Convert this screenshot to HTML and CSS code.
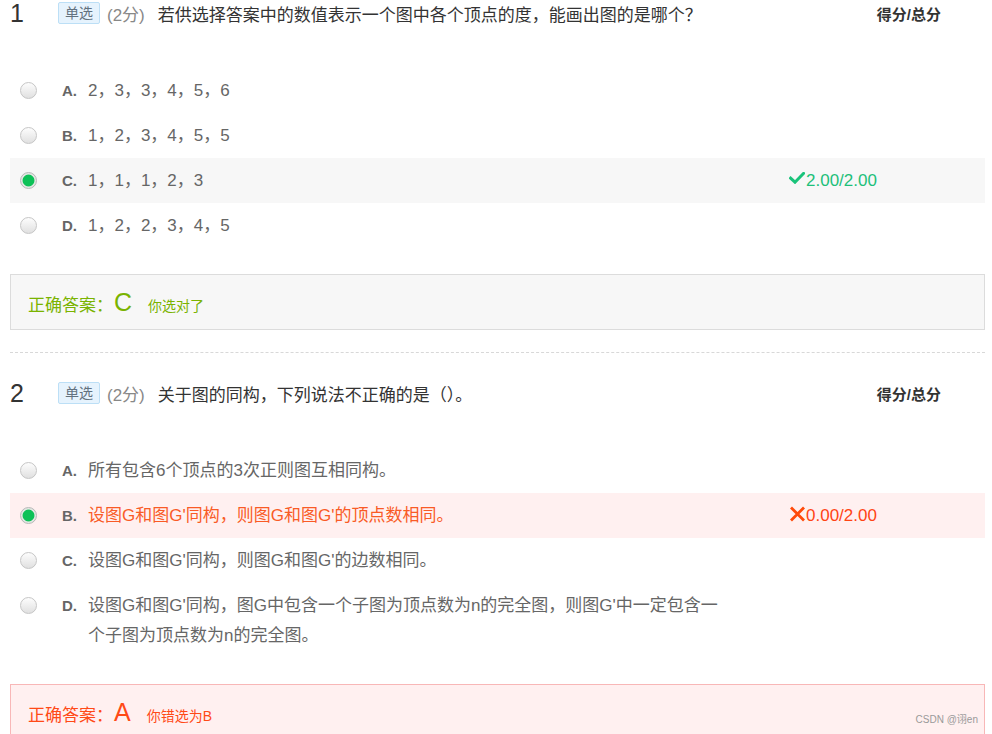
FILE: index.html
```html
<!DOCTYPE html>
<html lang="zh-CN">
<head>
<meta charset="utf-8">
<title>作业详情</title>
<link rel="stylesheet" href="styles.css">
</head>
<body>
<div class="page">
  <section class="question">
    <div class="q-head">
      <span class="q-num">1</span>
      <span class="q-type">单选</span>
      <span class="q-score">(2分)</span>
      <span class="q-title">若供选择答案中的数值表示一个图中各个顶点的度，能画出图的是哪个？</span>
      <span class="q-total">得分/总分</span>
    </div>
    <ul class="options">
      <li class="option"><span class="radio"></span><span class="opt-letter">A.</span><span class="opt-text">2，3，3，4，5，6</span></li>
      <li class="option"><span class="radio"></span><span class="opt-letter">B.</span><span class="opt-text">1，2，3，4，5，5</span></li>
      <li class="option option--right"><span class="radio radio--checked"></span><span class="opt-letter">C.</span><span class="opt-text">1，1，1，2，3</span>
        <span class="opt-result result--right"><svg class="icon-check" viewBox="0 0 16 12" width="16" height="12"><path d="M1.6 6.2 L6 10.2 L14.6 1.4" fill="none" stroke="#19c37a" stroke-width="3" stroke-linecap="square"/></svg>2.00/2.00</span></li>
      <li class="option"><span class="radio"></span><span class="opt-letter">D.</span><span class="opt-text">1，2，2，3，4，5</span></li>
    </ul>
    <div class="answer answer--right">
      <span class="answer-label">正确答案：</span><span class="answer-key">C</span><span class="answer-note">你选对了</span>
    </div>
  </section>

  <hr class="divider">

  <section class="question">
    <div class="q-head">
      <span class="q-num">2</span>
      <span class="q-type">单选</span>
      <span class="q-score">(2分)</span>
      <span class="q-title">关于图的同构，下列说法不正确的是（）。</span>
      <span class="q-total">得分/总分</span>
    </div>
    <ul class="options">
      <li class="option"><span class="radio"></span><span class="opt-letter">A.</span><span class="opt-text">所有包含6个顶点的3次正则图互相同构。</span></li>
      <li class="option option--wrong"><span class="radio radio--checked"></span><span class="opt-letter">B.</span><span class="opt-text">设图G和图G'同构，则图G和图G'的顶点数相同。</span>
        <span class="opt-result result--wrong"><svg class="icon-cross" viewBox="0 0 17 16" width="17" height="16"><path d="M2 1.5 L15 14.5 M15 1.5 L2 14.5" fill="none" stroke="#ff4a0a" stroke-width="2.8"/></svg>0.00/2.00</span></li>
      <li class="option"><span class="radio"></span><span class="opt-letter">C.</span><span class="opt-text">设图G和图G'同构，则图G和图G'的边数相同。</span></li>
      <li class="option"><span class="radio"></span><span class="opt-letter">D.</span><span class="opt-text">设图G和图G'同构，图G中包含一个子图为顶点数为n的完全图，则图G'中一定包含一个子图为顶点数为n的完全图。</span></li>
    </ul>
    <div class="answer answer--wrong">
      <span class="answer-label">正确答案：</span><span class="answer-key">A</span><span class="answer-note">你错选为B</span>
    </div>
  </section>

  <div class="watermark">CSDN @诩en</div>
</div>
</body>
</html>
```

FILE: styles.css
```css
html, body {
  margin: 0;
  padding: 0;
  height: 734px;
  overflow: hidden;
  background: #fff;
}

body {
  font-family: "Liberation Sans", "Noto Sans CJK SC", sans-serif;
  color: #333;
}

.page {
  position: relative;
  width: 975px;
  padding-left: 10px;
  height: 734px;
}

.q-head {
  display: flex;
  align-items: center;
  height: 26px;
  margin-bottom: 42px;
  white-space: nowrap;
}

.q-num {
  width: 48px;
  font-size: 25px;
  line-height: 26px;
  color: #333;
}

.q-type {
  box-sizing: border-box;
  height: 22px;
  line-height: 20px;
  padding: 0 6px;
  border: 1px solid #bcdff6;
  background: #e6f3fd;
  border-radius: 2px;
  font-size: 14px;
  color: #63727f;
}

.q-score {
  margin-left: 7px;
  margin-right: 13px;
  font-size: 17px;
  color: #888;
}

.q-title {
  flex: 1;
  font-size: 17px;
  color: #333;
}

.q-total {
  margin-right: 44px;
  font-size: 15px;
  font-weight: bold;
  color: #333;
}

.options {
  list-style: none;
  margin: 0;
  padding: 0;
}

.option {
  display: flex;
  align-items: flex-start;
  padding: 7.5px 0 7.5px 10px;
  line-height: 30px;
  font-size: 17px;
  color: #666;
}

.option--right {
  background: #f7f7f7;
}

.option--wrong {
  background: #fff0f0;
}

.radio {
  flex: none;
  box-sizing: border-box;
  width: 17px;
  height: 17px;
  margin-top: 6.5px;
  margin-right: 25px;
  border-radius: 50%;
  border: 1px solid #c6c6c6;
  background: linear-gradient(#fdfdfd, #e0e0e0);
}

.radio--checked {
  border-color: #b8b8b8;
  background: radial-gradient(circle, #0dc157 0, #0dc157 5.4px, #e2e8e3 6.4px);
}

.opt-letter {
  flex: none;
  width: 26px;
  font-size: 15px;
  font-weight: bold;
  color: #666;
}

.opt-text {
  width: 640px;
  color: #666;
}

.option--wrong .opt-text {
  color: #f95b26;
}

.opt-result {
  margin-left: 61px;
  font-size: 17px;
  white-space: nowrap;
}

.result--right {
  color: #1dc07a;
}

.result--wrong {
  color: #ff4414;
}

.icon-check {
  vertical-align: 2px;
  margin-right: 1px;
}

.icon-cross {
  vertical-align: -1px;
}

.answer {
  box-sizing: border-box;
  height: 56px;
  margin-top: 26px;
  padding-left: 17px;
  line-height: 54px;
  white-space: nowrap;
}

.answer--right {
  border: 1px solid #dcdcdc;
  background: #f7f7f7;
  color: #7ab300;
}

.answer--wrong {
  border: 1px solid #f8b7b7;
  background: #fff0f0;
  color: #ff4a17;
}

.answer-label {
  font-size: 17px;
}

.answer-key {
  font-size: 25px;
  margin-left: 1px;
}

.answer-note {
  margin-left: 16px;
  font-size: 14px;
}

.divider {
  height: 0;
  margin: 22px 0 27px;
  border: 0;
  border-top: 1px dashed #d8d8d8;
}

.watermark {
  position: absolute;
  top: 711px;
  right: 7px;
  font-size: 10px;
  color: #9a9a9a;
}
```
